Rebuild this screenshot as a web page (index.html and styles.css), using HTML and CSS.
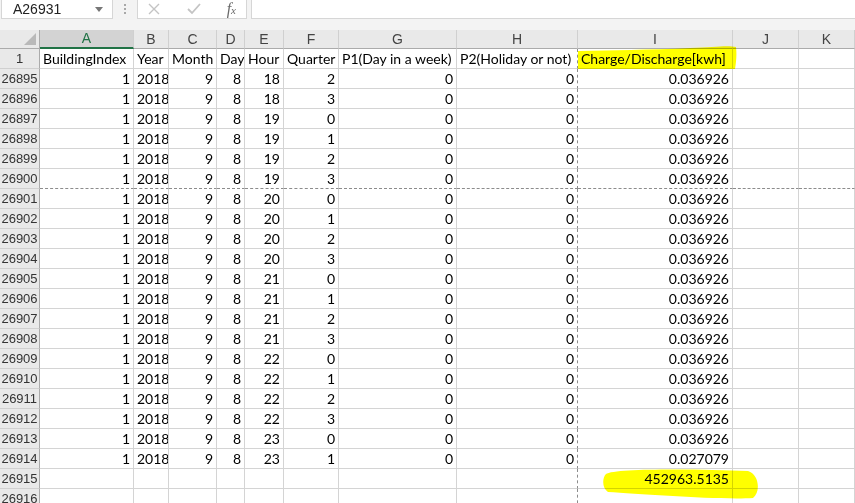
FILE: index.html
```html
<!DOCTYPE html>
<html>
<head>
<meta charset="utf-8">
<link rel="stylesheet" href="styles.css">
</head>
<body>
<div class="page">
  <div class="topbar">
    <div class="namebox"><span class="nbtext">A26931</span><span class="nbarrow"></span></div>
    <div class="sep"><i></i><i></i><i></i></div>
    <div class="fbtns">
      <svg class="ico" width="14" height="14" viewBox="0 0 14 14"><path d="M2,2 L12,12 M12,2 L2,12" stroke="#c4c4c4" stroke-width="1.4" fill="none"/></svg>
      <svg class="ico" width="16" height="14" viewBox="0 0 16 14"><path d="M2,7 L6,11 L14,2" stroke="#c4c4c4" stroke-width="1.8" fill="none"/></svg>
      <span class="fx-f">f<sub>x</sub></span>
    </div>
    <div class="finput"></div>
  </div>
  <div class="sheet">
    <div class="row hdr">
      <div class="corner"><span class="tri"></span></div>
      <div class="ch sel">A</div><div class="ch">B</div><div class="ch">C</div><div class="ch">D</div><div class="ch">E</div><div class="ch">F</div><div class="ch">G</div><div class="ch pbh">H</div><div class="ch">I</div><div class="ch">J</div><div class="ch">K</div>
    </div>
    <div class="row">
      <div class="rh">1</div>
      <div class="c">BuildingIndex</div><div class="c">Year</div><div class="c">Month</div><div class="c">Day</div><div class="c">Hour</div><div class="c">Quarter</div><div class="c">P1(Day in a week)</div><div class="c pb">P2(Holiday or not)</div><div class="c">Charge/Discharge[kwh]</div><div class="c"></div><div class="c"></div>
    </div>
    <div class="row"><div class="rh">26895</div><div class="c n">1</div><div class="c n">2018</div><div class="c n">9</div><div class="c n">8</div><div class="c n">18</div><div class="c n">2</div><div class="c n">0</div><div class="c n pb">0</div><div class="c n">0.036926</div><div class="c"></div><div class="c"></div></div>
    <div class="row"><div class="rh">26896</div><div class="c n">1</div><div class="c n">2018</div><div class="c n">9</div><div class="c n">8</div><div class="c n">18</div><div class="c n">3</div><div class="c n">0</div><div class="c n pb">0</div><div class="c n">0.036926</div><div class="c"></div><div class="c"></div></div>
    <div class="row"><div class="rh">26897</div><div class="c n">1</div><div class="c n">2018</div><div class="c n">9</div><div class="c n">8</div><div class="c n">19</div><div class="c n">0</div><div class="c n">0</div><div class="c n pb">0</div><div class="c n">0.036926</div><div class="c"></div><div class="c"></div></div>
    <div class="row"><div class="rh">26898</div><div class="c n">1</div><div class="c n">2018</div><div class="c n">9</div><div class="c n">8</div><div class="c n">19</div><div class="c n">1</div><div class="c n">0</div><div class="c n pb">0</div><div class="c n">0.036926</div><div class="c"></div><div class="c"></div></div>
    <div class="row"><div class="rh">26899</div><div class="c n">1</div><div class="c n">2018</div><div class="c n">9</div><div class="c n">8</div><div class="c n">19</div><div class="c n">2</div><div class="c n">0</div><div class="c n pb">0</div><div class="c n">0.036926</div><div class="c"></div><div class="c"></div></div>
    <div class="row brk"><div class="rh">26900</div><div class="c n">1</div><div class="c n">2018</div><div class="c n">9</div><div class="c n">8</div><div class="c n">19</div><div class="c n">3</div><div class="c n">0</div><div class="c n pb">0</div><div class="c n">0.036926</div><div class="c"></div><div class="c"></div></div>
    <div class="row"><div class="rh">26901</div><div class="c n">1</div><div class="c n">2018</div><div class="c n">9</div><div class="c n">8</div><div class="c n">20</div><div class="c n">0</div><div class="c n">0</div><div class="c n pb">0</div><div class="c n">0.036926</div><div class="c"></div><div class="c"></div></div>
    <div class="row"><div class="rh">26902</div><div class="c n">1</div><div class="c n">2018</div><div class="c n">9</div><div class="c n">8</div><div class="c n">20</div><div class="c n">1</div><div class="c n">0</div><div class="c n pb">0</div><div class="c n">0.036926</div><div class="c"></div><div class="c"></div></div>
    <div class="row"><div class="rh">26903</div><div class="c n">1</div><div class="c n">2018</div><div class="c n">9</div><div class="c n">8</div><div class="c n">20</div><div class="c n">2</div><div class="c n">0</div><div class="c n pb">0</div><div class="c n">0.036926</div><div class="c"></div><div class="c"></div></div>
    <div class="row"><div class="rh">26904</div><div class="c n">1</div><div class="c n">2018</div><div class="c n">9</div><div class="c n">8</div><div class="c n">20</div><div class="c n">3</div><div class="c n">0</div><div class="c n pb">0</div><div class="c n">0.036926</div><div class="c"></div><div class="c"></div></div>
    <div class="row"><div class="rh">26905</div><div class="c n">1</div><div class="c n">2018</div><div class="c n">9</div><div class="c n">8</div><div class="c n">21</div><div class="c n">0</div><div class="c n">0</div><div class="c n pb">0</div><div class="c n">0.036926</div><div class="c"></div><div class="c"></div></div>
    <div class="row"><div class="rh">26906</div><div class="c n">1</div><div class="c n">2018</div><div class="c n">9</div><div class="c n">8</div><div class="c n">21</div><div class="c n">1</div><div class="c n">0</div><div class="c n pb">0</div><div class="c n">0.036926</div><div class="c"></div><div class="c"></div></div>
    <div class="row"><div class="rh">26907</div><div class="c n">1</div><div class="c n">2018</div><div class="c n">9</div><div class="c n">8</div><div class="c n">21</div><div class="c n">2</div><div class="c n">0</div><div class="c n pb">0</div><div class="c n">0.036926</div><div class="c"></div><div class="c"></div></div>
    <div class="row"><div class="rh">26908</div><div class="c n">1</div><div class="c n">2018</div><div class="c n">9</div><div class="c n">8</div><div class="c n">21</div><div class="c n">3</div><div class="c n">0</div><div class="c n pb">0</div><div class="c n">0.036926</div><div class="c"></div><div class="c"></div></div>
    <div class="row"><div class="rh">26909</div><div class="c n">1</div><div class="c n">2018</div><div class="c n">9</div><div class="c n">8</div><div class="c n">22</div><div class="c n">0</div><div class="c n">0</div><div class="c n pb">0</div><div class="c n">0.036926</div><div class="c"></div><div class="c"></div></div>
    <div class="row"><div class="rh">26910</div><div class="c n">1</div><div class="c n">2018</div><div class="c n">9</div><div class="c n">8</div><div class="c n">22</div><div class="c n">1</div><div class="c n">0</div><div class="c n pb">0</div><div class="c n">0.036926</div><div class="c"></div><div class="c"></div></div>
    <div class="row"><div class="rh">26911</div><div class="c n">1</div><div class="c n">2018</div><div class="c n">9</div><div class="c n">8</div><div class="c n">22</div><div class="c n">2</div><div class="c n">0</div><div class="c n pb">0</div><div class="c n">0.036926</div><div class="c"></div><div class="c"></div></div>
    <div class="row"><div class="rh">26912</div><div class="c n">1</div><div class="c n">2018</div><div class="c n">9</div><div class="c n">8</div><div class="c n">22</div><div class="c n">3</div><div class="c n">0</div><div class="c n pb">0</div><div class="c n">0.036926</div><div class="c"></div><div class="c"></div></div>
    <div class="row"><div class="rh">26913</div><div class="c n">1</div><div class="c n">2018</div><div class="c n">9</div><div class="c n">8</div><div class="c n">23</div><div class="c n">0</div><div class="c n">0</div><div class="c n pb">0</div><div class="c n">0.036926</div><div class="c"></div><div class="c"></div></div>
    <div class="row"><div class="rh">26914</div><div class="c n">1</div><div class="c n">2018</div><div class="c n">9</div><div class="c n">8</div><div class="c n">23</div><div class="c n">1</div><div class="c n">0</div><div class="c n pb">0</div><div class="c n">0.027079</div><div class="c"></div><div class="c"></div></div>
    <div class="row"><div class="rh">26915</div><div class="c"></div><div class="c"></div><div class="c"></div><div class="c"></div><div class="c"></div><div class="c"></div><div class="c"></div><div class="c pb"></div><div class="c n">452963.5135</div><div class="c"></div><div class="c"></div></div>
    <div class="row"><div class="rh">26916</div><div class="c"></div><div class="c"></div><div class="c"></div><div class="c"></div><div class="c"></div><div class="c"></div><div class="c"></div><div class="c pb"></div><div class="c"></div><div class="c"></div><div class="c"></div></div>
  </div>
  <svg class="marker" width="855" height="503" viewBox="0 0 855 503">
    <path d="M578,51 C610,50 650,50 690,48 C715,47 728,45 736,47 C737,55 736,63 735,69 L578,69 Z" fill="#ffff00"/>
    <path d="M606,474 C614,468 700,469 748,471 C759,474 761,492 753,498 C720,500 640,494 608,492 C602,488 602,478 606,474 Z" fill="#ffff00"/>
  </svg>
</div>
</body>
</html>
```

FILE: styles.css
```css
html, body {
  margin: 0;
  padding: 0;
}
body {
  background: #ffffff;
  font-family: "Lato", "Liberation Sans", sans-serif;
  color: #000;
}
.page {
  position: relative;
  width: 855px;
  height: 503px;
  overflow: hidden;
  background: #ffffff;
}
.topbar {
  height: 30px;
  background: #f3f3f3;
  display: flex;
  align-items: flex-start;
  box-sizing: border-box;
}
.namebox {
  box-sizing: border-box;
  width: 112px;
  height: 19px;
  margin-left: 1px;
  background: #fff;
  border: 1px solid #d6d6d6;
  border-top: none;
  display: flex;
  align-items: center;
  justify-content: space-between;
  padding: 0 9px 0 11px;
}
.nbtext {
  font-family: "Liberation Sans", sans-serif;
  font-size: 14px;
  color: #222;
}
.nbarrow {
  width: 0;
  height: 0;
  border-left: 4px solid transparent;
  border-right: 4px solid transparent;
  border-top: 5px solid #777;
}
.sep {
  width: 24px;
  height: 18px;
  display: flex;
  flex-direction: column;
  align-items: center;
  justify-content: center;
  gap: 2px;
}
.sep i {
  display: block;
  width: 2px;
  height: 2px;
  background: #a8a8a8;
}
.fbtns {
  box-sizing: border-box;
  width: 110px;
  height: 19px;
  background: #fff;
  border: 1px solid #d6d6d6;
  border-top: none;
  display: flex;
  align-items: center;
  justify-content: space-between;
  padding: 0 10px 0 9px;
}
.ico {
  display: block;
}
.fx-f {
  font-family: "Liberation Serif", serif;
  font-style: italic;
  font-size: 16px;
  line-height: 18px;
  color: #6a6a6a;
}
.fx-f sub {
  font-size: 11px;
  vertical-align: 0;
}
.finput {
  box-sizing: border-box;
  flex: 1;
  height: 19px;
  margin-left: 4px;
  background: #fff;
  border-left: 1px solid #d6d6d6;
  border-bottom: 1px solid #d6d6d6;
}
.sheet {
  display: flex;
  flex-direction: column;
}
.row {
  display: grid;
  grid-template-columns: 40px 94px 35px 48px 28px 39px 55px 118px 121px 155px 66px 56px;
  height: 20px;
}
.row > div {
  box-sizing: border-box;
  border-right: 1px solid #d4d4d4;
  border-bottom: 1px solid #d4d4d4;
  font-size: 14px;
  line-height: 20px;
  white-space: nowrap;
  overflow: hidden;
}
.hdr {
  height: 19px;
}
.hdr > div {
  background: #e9e9e9;
  border-bottom: 1px solid #ababab;
  border-right: 1px solid #d0d0d0;
  color: #444;
  text-align: center;
  font-family: "Liberation Sans", sans-serif;
  font-size: 14px;
  line-height: 18px;
}
.hdr > .sel {
  background: #d3d3d3;
  color: #217346;
  border-bottom: 2px solid #217346;
  line-height: 17px;
}
.hdr > .corner {
  display: flex;
  justify-content: flex-end;
  align-items: flex-end;
  padding: 0 3px 3px 0;
  border-right: 1px solid #ababab;
}
.tri {
  display: block;
  width: 12px;
  height: 12px;
  background: #b9b9b9;
  clip-path: polygon(100% 0, 100% 100%, 0 100%);
}
.row > .rh {
  background: #e9e9e9;
  border-right: 1px solid #ababab;
  border-bottom: 1px solid #d0d0d0;
  text-align: center;
  color: #333;
  font-family: "Liberation Sans", sans-serif;
  font-size: 13px;
}
.c {
  padding: 0 3px;
  text-align: left;
}
.c.n {
  text-align: right;
}
.row > .pb {
  border-right: 1px dashed #8c8c8c;
}
.brk > .c {
  border-bottom: 1px dashed #8c8c8c;
}
.marker {
  position: absolute;
  left: 0;
  top: 0;
  pointer-events: none;
  mix-blend-mode: multiply;
}
```
